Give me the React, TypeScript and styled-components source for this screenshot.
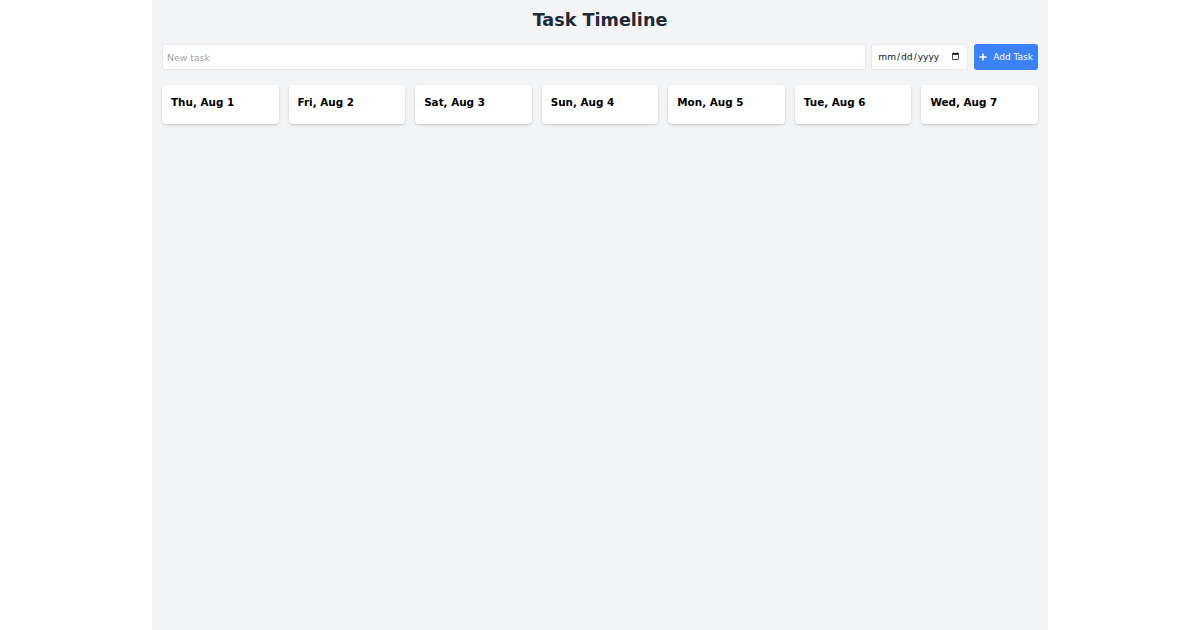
import styled, { createGlobalStyle } from "styled-components";

const GlobalStyle = createGlobalStyle`
  html, body {
    margin: 0;
    padding: 0;
    background: #ffffff;
    font-family: "DejaVu Sans", sans-serif;
  }
  * {
    box-sizing: border-box;
  }
`;

const Page = styled.div`
  max-width: 896px;
  min-height: 100vh;
  margin: 0 auto;
  padding: 9px 10px 8px;
  background: #f3f4f6;
`;

const Title = styled.h1`
  margin: 0 0 13px;
  font-size: 17.6px;
  line-height: 22px;
  font-weight: bold;
  text-align: center;
  color: #1f2937;
`;

const Toolbar = styled.div`
  display: flex;
  align-items: center;
  margin-bottom: 15px;
`;

const TaskInput = styled.input`
  flex: 1;
  height: 26px;
  padding: 0 4px;
  border: 1px solid #e5e7eb;
  border-radius: 2px;
  background: #ffffff;
  font-family: "DejaVu Sans", sans-serif;
  font-size: 9.3px;
  color: #111827;
  outline: none;

  &::placeholder {
    color: #9ca3af;
  }
`;

const DateInput = styled.input`
  width: 97px;
  height: 26px;
  margin-left: 5px;
  padding: 0 5px;
  border: 1px solid #e5e7eb;
  border-radius: 2px;
  background: #ffffff;
  font-family: "DejaVu Sans", sans-serif;
  font-size: 9.1px;
  color: #111827;
  outline: none;
`;

const AddButton = styled.button`
  display: flex;
  align-items: center;
  gap: 6px;
  height: 26px;
  margin-left: 6px;
  padding: 0 5px;
  border: none;
  border-radius: 3px;
  background: #3b82f6;
  color: #ffffff;
  font-family: "DejaVu Sans", sans-serif;
  font-size: 9px;
  cursor: pointer;
`;

const Days = styled.div`
  display: grid;
  grid-template-columns: repeat(7, 1fr);
  gap: 10px;
`;

const DayCard = styled.div`
  padding: 9px 9px 11px;
  border-radius: 4px;
  background: #ffffff;
  box-shadow: 0 1px 3px rgba(0, 0, 0, 0.12), 0 1px 2px rgba(0, 0, 0, 0.08);
`;

const DayTitle = styled.h3`
  margin: 0 0 3px;
  font-size: 10.4px;
  line-height: 16px;
  font-weight: bold;
  color: #000000;
`;

const days = [
  "Thu, Aug 1",
  "Fri, Aug 2",
  "Sat, Aug 3",
  "Sun, Aug 4",
  "Mon, Aug 5",
  "Tue, Aug 6",
  "Wed, Aug 7",
];

const PlusIcon = () => (
  <svg width="8" height="8" viewBox="0 0 8 8" aria-hidden="true">
    <path d="M4 0.5v7M0.5 4h7" stroke="#ffffff" strokeWidth="1.6" />
  </svg>
);

export default function App() {
  return (
    <>
      <GlobalStyle />
      <Page>
        <Title>Task Timeline</Title>
        <Toolbar>
          <TaskInput placeholder="New task" />
          <DateInput type="date" />
          <AddButton>
            <PlusIcon />
            Add Task
          </AddButton>
        </Toolbar>
        <Days>
          {days.map((d) => (
            <DayCard key={d}>
              <DayTitle>{d}</DayTitle>
            </DayCard>
          ))}
        </Days>
      </Page>
    </>
  );
}
